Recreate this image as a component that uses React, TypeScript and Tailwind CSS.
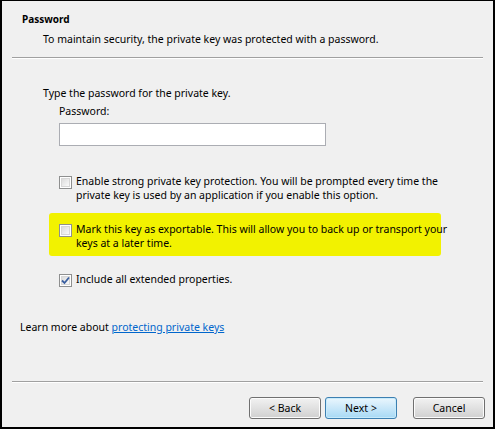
import React from 'react';

function Checkbox({ checked = false }: { checked?: boolean }) {
  return (
    <span className="relative mt-[2px] h-[13px] w-[13px] shrink-0 border border-[#8e8f8f] bg-white">
      <span className="absolute inset-[1px] border border-[#d7d7d7] bg-gradient-to-br from-[#dcdcdc] to-[#fafafa]" />
      {checked && (
        <svg className="absolute left-[1px] top-[1px]" width="9" height="9" viewBox="0 0 9 9">
          <path d="M1 4.5 L3.5 7 L8 1.5" fill="none" stroke="#3a5fa0" strokeWidth="1.8" />
        </svg>
      )}
    </span>
  );
}

function Separator() {
  return (
    <div className="mx-[10px]">
      <div className="h-px bg-[#a0a0a0]" />
      <div className="h-px bg-white" />
    </div>
  );
}

function WizardButton({ label, primary = false }: { label: string; primary?: boolean }) {
  return (
    <button
      type="button"
      className={
        primary
          ? 'h-[22px] w-[72px] rounded-[3px] border border-[#3c7fb1] bg-gradient-to-b from-[#eaf6fd] to-[#a7d9f5] text-[10.5px] text-black shadow-[inset_0_0_0_1px_#c8ebfb]'
          : 'h-[22px] w-[72px] rounded-[3px] border border-[#707070] bg-gradient-to-b from-[#f2f2f2] to-[#d0d0d0] text-[10.5px] text-black shadow-[inset_0_0_0_1px_#fcfcfc]'
      }
    >
      {label}
    </button>
  );
}

export default function App() {
  return (
    <div
      className="flex h-[429px] w-[495px] flex-col border-t border-r-2 border-b-2 border-l-2 border-black bg-[#f0f0f0] text-[10.5px] leading-[15px] text-black"
      style={{ fontFamily: '"Noto Sans", "Open Sans", sans-serif' }}
    >
      <div className="pl-[20px] pt-[11px]">
        <div className="text-[10px] font-bold">Password</div>
        <div className="mt-[5px] pl-[21px]">To maintain security, the private key was protected with a password.</div>
      </div>
      <div className="mt-[10px]">
        <Separator />
      </div>

      <div className="pl-[41px] pt-[27px]">
        <div>Type the password for the private key.</div>
        <div className="mt-[3px] pl-[16px]">Password:</div>
        <input
          type="password"
          className="ml-[16px] mt-[4px] h-[23px] w-[267px] border border-[#abadb3] bg-white outline-none"
        />

        <div className="mt-[28px] flex gap-[4px] pl-[16px] leading-[14px]">
          <Checkbox />
          <div className="whitespace-nowrap">
            Enable strong private key protection. You will be prompted every time the
            <br />
            private key is used by an application if you enable this option.
          </div>
        </div>

        <div className="ml-[6px] mt-[11px] mr-[52px] flex gap-[4px] rounded-[3px] bg-[#f2f200] pb-[6px] pl-[10px] pt-[9px] leading-[14px]">
          <Checkbox />
          <div className="whitespace-nowrap">
            Mark this key as exportable. This will allow you to back up or transport your
            <br />
            keys at a later time.
          </div>
        </div>

        <div className="mt-[16px] flex gap-[4px] pl-[16px] leading-[14px]">
          <Checkbox checked />
          <div>Include all extended properties.</div>
        </div>
      </div>

      <div className="mt-[33px] pl-[18px]">
        Learn more about{' '}
        <a href="#" className="text-[#0066cc] underline">
          protecting private keys
        </a>
      </div>

      <div className="flex-1" />
      <Separator />
      <div className="flex justify-end gap-[4px] pr-[8px] pt-[14px] pb-[8px]">
        <WizardButton label="< Back" />
        <WizardButton label="Next >" primary />
        <div className="w-[8px]" />
        <WizardButton label="Cancel" />
      </div>
    </div>
  );
}
